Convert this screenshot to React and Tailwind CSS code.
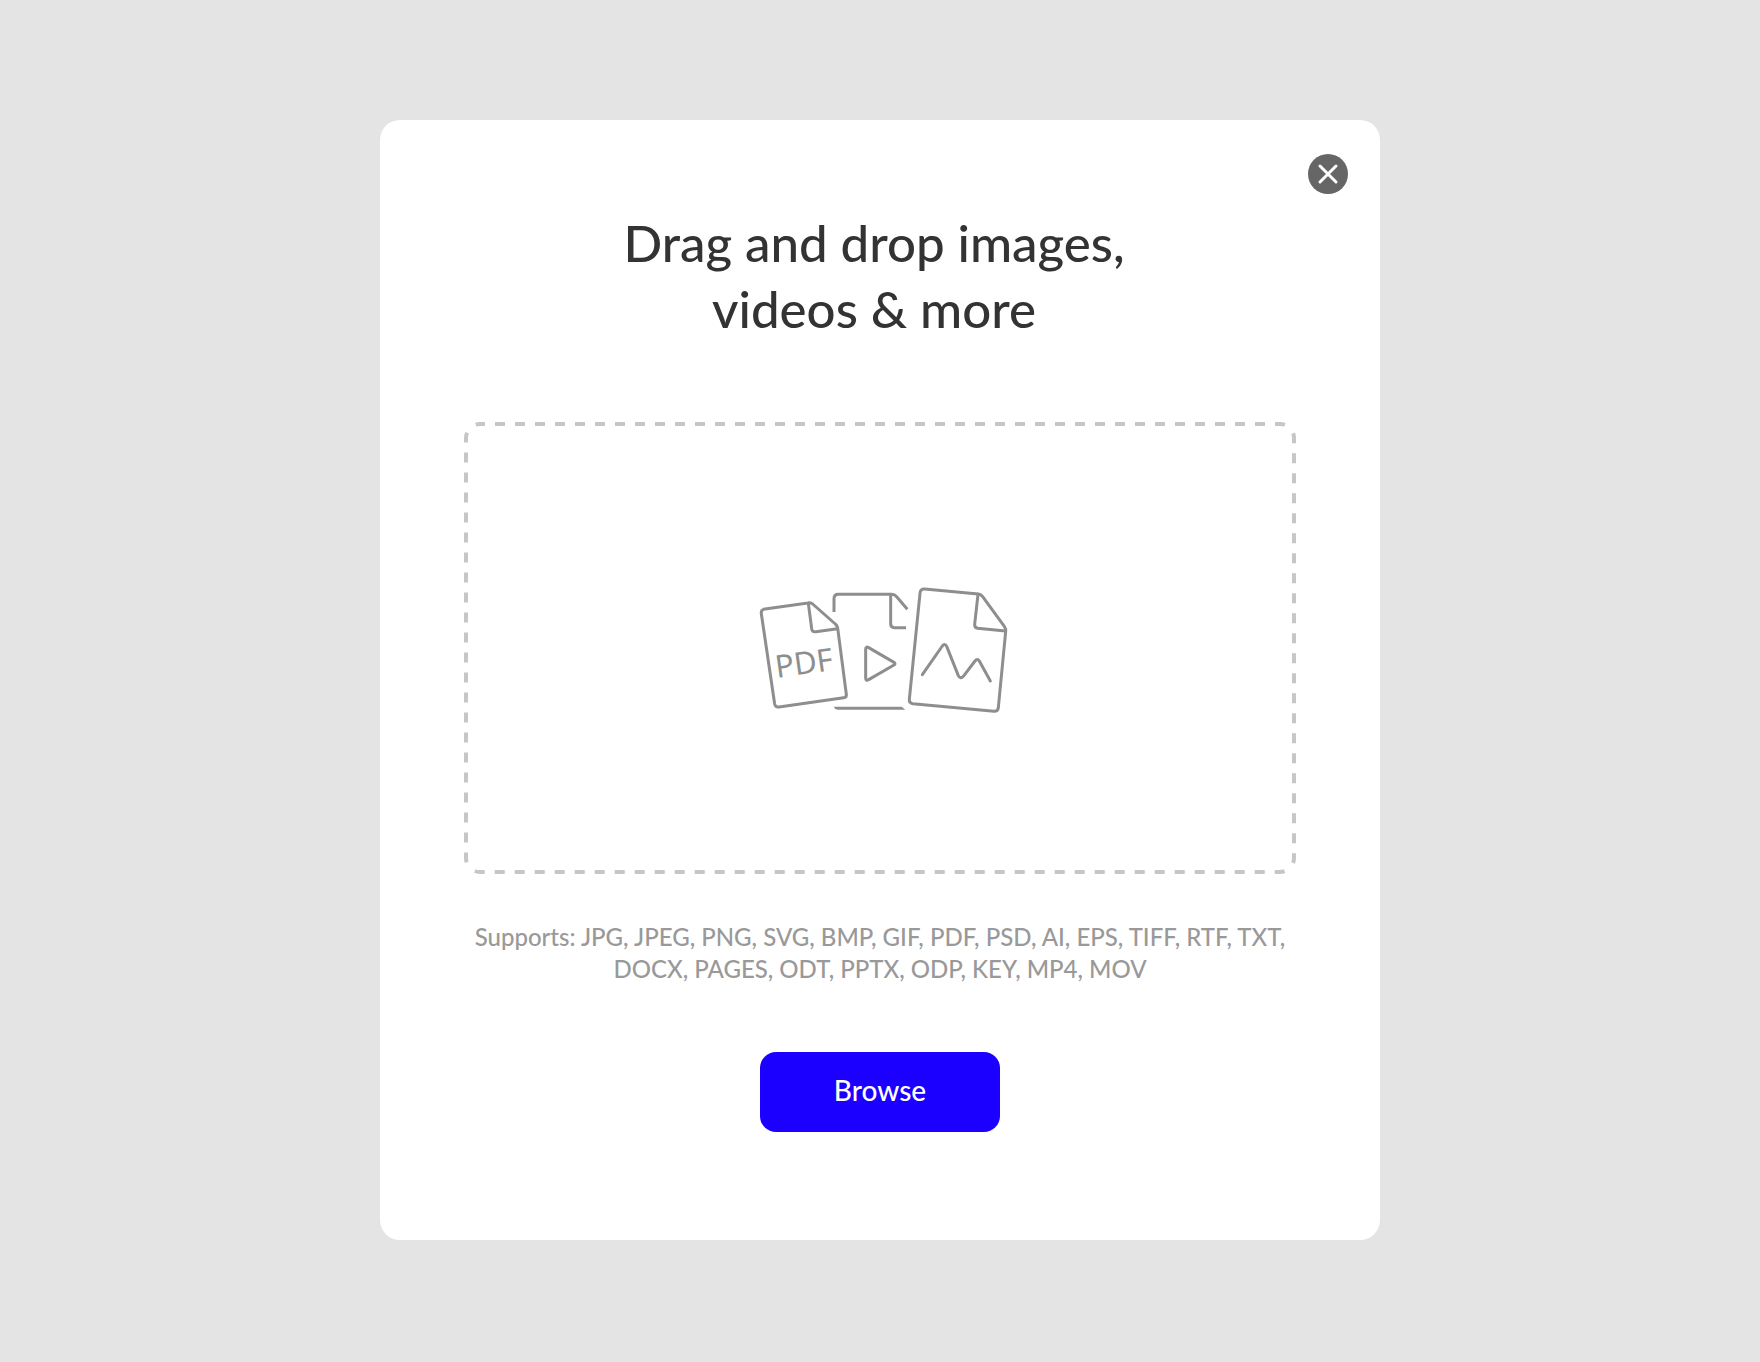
// Ten-pixel dashes along each side, with a slightly longer gap at every corner.
const topDashes = Array(40).fill("10 10").join(" ");
const sideDashes = Array(21).fill("10 10").join(" ");
const dashPattern = `${topDashes} 10 12 ${sideDashes} 10 12`;

function CloseButton() {
  return (
    <button
      type="button"
      aria-label="Close"
      className="flex size-10 items-center justify-center rounded-full bg-[#666666] text-white"
    >
      <svg viewBox="0 0 40 40" className="size-10" fill="none" stroke="currentColor" strokeWidth="3" strokeLinecap="round" aria-hidden="true">
        <path d="M12 12 28 28M28 12 12 28" />
      </svg>
    </button>
  );
}

function DashedOutline() {
  return (
    <svg className="absolute inset-0 size-full" fill="none" aria-hidden="true">
      <rect
        x="2"
        y="2"
        rx="14"
        stroke="#c6c6c6"
        strokeWidth="4"
        strokeDasharray={dashPattern}
        strokeDashoffset="5"
        className="h-[calc(100%-4px)] w-[calc(100%-4px)]"
      />
    </svg>
  );
}

function FilesIcon() {
  return (
    <svg
      viewBox="0 12 780 384"
      className="h-32 w-[260px] overflow-visible"
      fill="none"
      stroke="#8e8e8e"
      strokeWidth="9"
      strokeLinecap="round"
      strokeLinejoin="round"
      aria-hidden="true"
    >
      {/* PDF page */}
      <path d="M45 87 174 69Q182 67 188 72L256 132Q262 137 263 144L289 343Q290 352 281 353L87 381Q76 383 74 372L34 101Q32 89 45 87Z" />
      <path d="M175 70 185 146Q187 157 198 155L262 146" />
      <text
        x="80"
        y="294"
        transform="rotate(-8 80 294)"
        fill="#8e8e8e"
        stroke="none"
        className="font-['Noto_Sans'] text-[94px]"
      >
        PDF
      </text>
      {/* Video page, partly hidden by its neighbours */}
      <g strokeLinecap="butt">
        <path d="M252 96V56Q252 43 265 43H425Q434 43 440 50L472 88" />
        <path d="M422 44V132Q422 143 433 143H468" />
        <path d="M251 380H455L466 389H263Q255 389 251 380Z" fill="#8e8e8e" stroke="none" />
      </g>
      <path d="M347 208V294Q347 304 356 299L432 255Q438 251 432 247L356 203Q347 198 347 208Z" />
      {/* Image page */}
      <path d="M524 27 685 42Q693 43 698 50L763 139Q768 146 767 155L745 383Q744 395 732 394L489 371Q477 369 478 358L510 40Q511 26 524 27Z" />
      <path d="M684 43 674 133Q673 143 683 145L766 153" />
      <path d="M517 284 577 198Q584 189 590 199L625 287Q631 299 640 289L675 243Q682 234 688 243L721 303" />
    </svg>
  );
}

export default function App() {
  return (
    <main className="flex min-h-screen justify-center bg-[#e4e4e4] px-6 py-[120px] font-[Lato,sans-serif]">
      <section
        role="dialog"
        aria-labelledby="upload-title"
        className="flex w-full max-w-[1000px] flex-col self-start rounded-[20px] bg-white px-8 pt-[34px] pb-[108px]"
      >
        <div className="flex justify-end">
          <CloseButton />
        </div>

        <div className="flex flex-col items-center">
          <h1
            id="upload-title"
            className="mt-4 pr-3 text-center text-[51px] leading-[66px] font-medium text-[#333333]"
          >
            Drag and drop images,
            <br />
            videos &amp; more
          </h1>

          <div className="relative mt-20 flex h-[452px] w-full max-w-[832px] items-center justify-center">
            <DashedOutline />
            <FilesIcon />
          </div>

          <p className="mt-[47px] w-full max-w-[832px] text-center text-2xl leading-8 font-medium text-[#999999]">
            Supports: JPG, JPEG, PNG, SVG, BMP, GIF, PDF, PSD, AI, EPS, TIFF, RTF, TXT, DOCX, PAGES, ODT, PPTX, ODP,
            KEY, MP4, MOV
          </p>

          <button
            type="button"
            className="mt-[67px] h-20 w-60 rounded-2xl bg-[#1b00ff] pb-1 text-[28px] leading-9 font-medium text-white"
          >
            Browse
          </button>
        </div>
      </section>
    </main>
  );
}
